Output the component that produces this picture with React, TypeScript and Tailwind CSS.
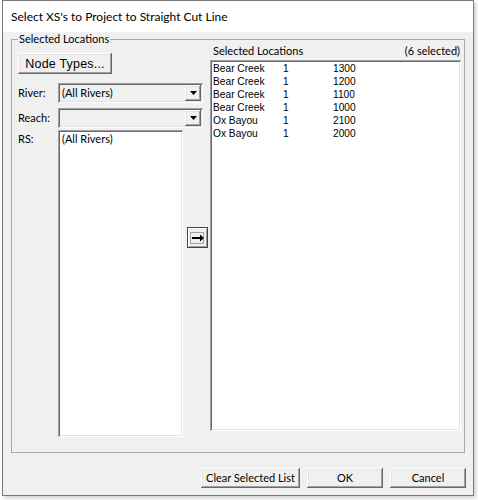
import React from 'react';

const ui = "font-['Lato','Noto_Sans',sans-serif] text-[11px] text-black";
const raised =
  'shadow-[inset_-1px_-1px_#696969,inset_1px_1px_#ffffff,inset_-2px_-2px_#a0a0a0,inset_2px_2px_#e3e3e3]';
const sunken =
  'shadow-[inset_1px_1px_#a0a0a0,inset_-1px_-1px_#ffffff,inset_2px_2px_#696969,inset_-2px_-2px_#e3e3e3]';

const rows = [
  ['Bear Creek', '1', '1300'],
  ['Bear Creek', '1', '1200'],
  ['Bear Creek', '1', '1100'],
  ['Bear Creek', '1', '1000'],
  ['Ox Bayou', '1', '2100'],
  ['Ox Bayou', '1', '2000'],
];

function Combo({ value }: { value: string }) {
  return (
    <div className={`w-[145px] h-[20px] bg-[#f0f0f0] ${sunken} flex items-center pl-[4px] pr-[2px]`}>
      <span className="flex-1 leading-[14px]">{value}</span>
      <div className={`w-[16px] h-[16px] bg-[#f0f0f0] ${raised} flex items-center justify-center`}>
        <svg width="7" height="4" viewBox="0 0 7 4">
          <path d="M0 0h7L3.5 4z" fill="#000" />
        </svg>
      </div>
    </div>
  );
}

function DlgButton({ label, width }: { label: string; width: string }) {
  return (
    <button className={`${width} h-[20px] bg-[#f0f0f0] ${raised} flex items-center justify-center leading-[14px]`}>
      {label}
    </button>
  );
}

export default function App() {
  return (
    <div className={`w-[478px] h-[500px] bg-white ${ui}`}>
      <div className="ml-[2px] w-[472px] h-[496px] border border-[#7a7a7a] flex flex-col shadow-[2px_2px_4px_rgba(0,0,0,0.2)]">
        {/* Title bar */}
        <div className="h-[31px] bg-white pl-[8px] flex items-center text-[12px]">
          Select XS's to Project to Straight Cut Line
        </div>

        {/* Body */}
        <div className="flex-1 bg-[#f0f0f0] pl-[8px] pr-[7px] flex flex-col">
          <fieldset className="mr-[1px] border border-[#a8a8a8]">
            <legend className="ml-[6px] px-[1px] leading-[14px]">Selected Locations</legend>
            <div className="flex pl-[6px] pb-[15px]">
              {/* Left column */}
              <div className="w-[190px] flex flex-col">
                <button
                  className={`mt-[7px] w-[94px] h-[21px] bg-[#f0f0f0] ${raised} font-['Liberation_Sans',sans-serif] text-[12.5px] tracking-[0.2px] leading-[14px]`}
                >
                  Node Types...
                </button>
                <div className="mt-[9px] flex items-center">
                  <span className="w-[40px] leading-[14px]">River:</span>
                  <Combo value="(All Rivers)" />
                </div>
                <div className="mt-[5px] flex items-center">
                  <span className="w-[40px] leading-[14px]">Reach:</span>
                  <Combo value="" />
                </div>
                <div className="mt-[2px] flex">
                  <span className="w-[40px] pt-[2px] leading-[14px]">RS:</span>
                  <div className={`w-[125px] h-[307px] bg-white ${sunken} pl-[4px] pt-[2px] leading-[14px]`}>
                    (All Rivers)
                  </div>
                  <div className="ml-[4px] pt-[97px]">
                    <button className="w-[21px] h-[21px] border border-[#4a4040] bg-[#f0f0f0] shadow-[inset_1px_1px_#ffffff,inset_-1px_-1px_#a0a0a0] flex items-center justify-center">
                      <svg width="15" height="12" viewBox="0 0 15 12">
                        <rect x="0.5" y="0.5" width="13" height="11" fill="none" stroke="#555" strokeDasharray="1 1" />
                        <path d="M2 6h9" stroke="#000" strokeWidth="2" />
                        <path d="M10 2.5L14 6l-4 3.5z" fill="#000" />
                      </svg>
                    </button>
                  </div>
                </div>
              </div>

              {/* Right column */}
              <div className="ml-[2px] w-[251px] flex flex-col">
                <div className="-mt-[2px] flex justify-between leading-[14px] pl-[3px] pr-[1px]">
                  <span>Selected Locations</span>
                  <span>(6 selected)</span>
                </div>
                <div className={`mt-[2px] h-[371px] bg-white ${sunken} pl-[3px] pt-[2px]`}>
                  {rows.map((r, i) => (
                    <div key={i} className="flex font-['Liberation_Sans',sans-serif] text-[10.2px] leading-[13px]">
                      <span className="w-[70px]">{r[0]}</span>
                      <span className="w-[50px]">{r[1]}</span>
                      <span>{r[2]}</span>
                    </div>
                  ))}
                </div>
              </div>
            </div>
          </fieldset>

          {/* Bottom buttons */}
          <div className="mt-[15px] flex justify-end gap-[7px]">
            <DlgButton label="Clear Selected List" width="w-[99px]" />
            <DlgButton label="OK" width="w-[76px]" />
            <DlgButton label="Cancel" width="w-[76px]" />
          </div>
        </div>
      </div>
    </div>
  );
}
